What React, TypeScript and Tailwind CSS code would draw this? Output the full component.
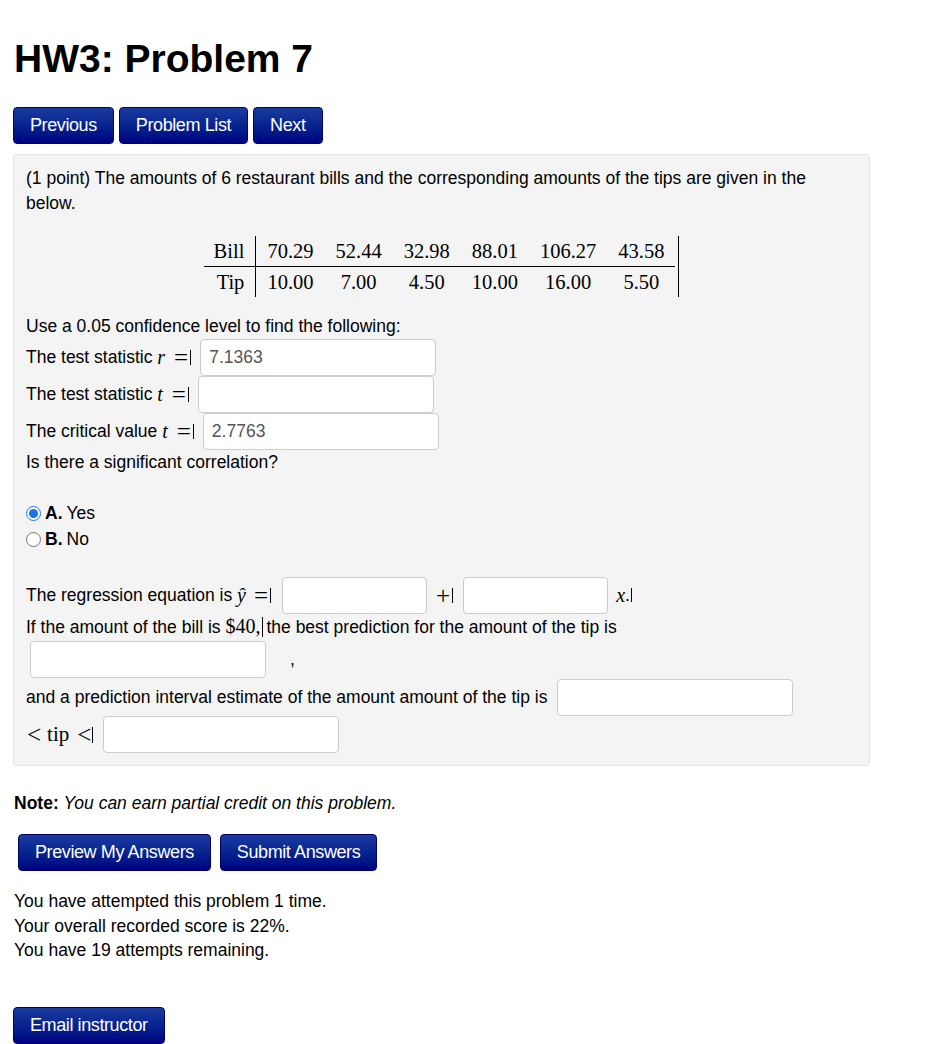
import React from "react"

const btn =
  "inline-flex items-center h-[37px] px-[16px] rounded-[4px] border border-[#000066] bg-gradient-to-b from-[#1b3a9f] to-[#000080] text-white text-[18px] tracking-[-0.4px]"

const Field = ({ value = "", w = 236, className = "" }: { value?: string; w?: number; className?: string }) => (
  <span
    style={{ width: w }}
    className={
      "inline-flex items-center align-middle h-[37px] px-[8px] bg-white border border-[#cccccc] rounded-[4px] text-[17.5px] text-[#555555] " +
      className
    }
  >
    {value}
  </span>
)

const M = ({ children }: { children: React.ReactNode }) => (
  <span className="font-['Liberation_Serif',serif] text-[20px] italic">{children}</span>
)

const Op = ({ sym = "=", className = "" }: { sym?: string; className?: string }) => (
  <span className={"inline-flex items-center font-['Liberation_Serif',serif] text-[25px] leading-none " + className}>
    {sym}
    <span className="inline-block w-px h-[15px] bg-black ml-[2px]" />
  </span>
)

const bills = ["70.29", "52.44", "32.98", "88.01", "106.27", "43.58"]
const tips = ["10.00", "7.00", "4.50", "10.00", "16.00", "5.50"]

export default function App() {
  return (
    <div className="font-['Liberation_Sans',Arial,sans-serif] text-[17.5px] text-black bg-white min-h-[1044px] px-[13px] pt-[36px]">
      <h1 className="text-[39px] font-bold leading-[46px] ml-[1px]">HW3: Problem 7</h1>
      <div className="flex gap-[5px] mt-[25px]">
        <span className={btn}>Previous</span>
        <span className={btn}>Problem List</span>
        <span className={btn}>Next</span>
      </div>

      <div className="mt-[10px] w-[857px] bg-[#f4f4f4] border border-[#e3e3e3] rounded-[3px] px-[12px] pt-[11px] pb-[12px] leading-[25px]">
        <p>
          (1 point) The amounts of 6 restaurant bills and the corresponding amounts of the tips are given in the
          below.
        </p>
        <div className="flex justify-center mt-[20px]">
          <div className="border-r border-black pr-[3px]">
            <table className="font-['Liberation_Serif',serif] text-[20.5px] leading-[30px] border-collapse">
              <tbody>
                <tr className="border-b border-black">
                  <td className="pl-[10px] pr-[11px] border-r border-black text-right">Bill</td>
                  {bills.map((b, i) => (
                    <td key={i} className="px-[11px] text-center">{b}</td>
                  ))}
                </tr>
                <tr>
                  <td className="pl-[10px] pr-[11px] border-r border-black text-right">Tip</td>
                  {tips.map((t, i) => (
                    <td key={i} className="px-[11px] text-center">{t}</td>
                  ))}
                </tr>
              </tbody>
            </table>
          </div>
        </div>

        <p className="mt-[17px]">Use a 0.05 confidence level to find the following:</p>
        <div className="flex items-center h-[37px]">
          The test statistic&nbsp;<M>r</M>
          <Op className="ml-[9px]" />
          <Field value="7.1363" className="ml-[9px]" />
        </div>
        <div className="flex items-center h-[37px]">
          The test statistic&nbsp;<M>t</M>
          <Op className="ml-[9px]" />
          <Field className="ml-[9px]" />
        </div>
        <div className="flex items-center h-[37px]">
          The critical value&nbsp;<M>t</M>
          <Op className="ml-[9px]" />
          <Field value="2.7763" className="ml-[9px]" />
        </div>
        <p className="mt-[0px]">Is there a significant correlation?</p>

        <div className="mt-[26px] flex flex-col gap-[1px]">
          <label className="flex items-center gap-[4px]">
            <input type="radio" defaultChecked name="c" className="w-[15px] h-[15px] m-0 accent-[#1a73e8]" />
            <b>A.</b> Yes
          </label>
          <label className="flex items-center gap-[4px]">
            <input type="radio" name="c" className="w-[15px] h-[15px] m-0" />
            <b>B.</b> No
          </label>
        </div>

        <div className="flex items-center h-[38px] mt-[24px]">
          The regression equation is&nbsp;<M>ŷ</M>
          <Op className="ml-[8px]" />
          <Field w={145} className="ml-[11px]" />
          <Op sym="+" className="ml-[9px]" />
          <Field w={145} className="ml-[10px]" />
          <span className="ml-[8px] inline-flex items-center">
            <M>x</M>.
            <span className="inline-block w-px h-[14px] bg-black ml-[1px]" />
          </span>
        </div>
        <p className="mt-[0px]">
          If the amount of the bill is{" "}
          <span className="font-['Liberation_Serif',serif] text-[20px]">$40,</span>
          <span className="inline-block w-px h-[20px] bg-black ml-[2px] mr-[3px] align-[-4px]" />
          the best prediction for the amount of the tip is
        </p>
        <div className="flex items-center h-[37px] mt-[1px] ml-[4px]">
          <Field />
          <span className="ml-[24px]">,</span>
        </div>
        <div className="flex items-center h-[38px]">
          and a prediction interval estimate of the amount amount of the tip is
          <Field className="ml-[10px]" />
        </div>
        <div className="flex items-center h-[37px]">
          <span className="inline-flex items-center font-['Liberation_Serif',serif] text-[21px]">
            <span className="text-[25px] leading-none ml-[1px]">&lt;</span>
            <span className="ml-[6px]">tip</span>
            <span className="text-[25px] leading-none ml-[8px]">&lt;</span>
            <span className="inline-block w-px h-[16px] bg-black ml-[1px]" />
          </span>
          <Field className="ml-[10px]" />
        </div>
      </div>

      <p className="mt-[24px] ml-[1px]">
        <b>Note:</b> <i>You can earn partial credit on this problem.</i>
      </p>
      <div className="flex gap-[9px] mt-[18px] ml-[5px]">
        <span className={btn}>Preview My Answers</span>
        <span className={btn}>Submit Answers</span>
      </div>
      <div className="mt-[18px] leading-[24.5px] ml-[1px]">
        <p>You have attempted this problem 1 time.</p>
        <p>Your overall recorded score is 22%.</p>
        <p>You have 19 attempts remaining.</p>
      </div>
      <div className="mt-[44px]">
        <span className={btn}>Email instructor</span>
      </div>
    </div>
  )
}
